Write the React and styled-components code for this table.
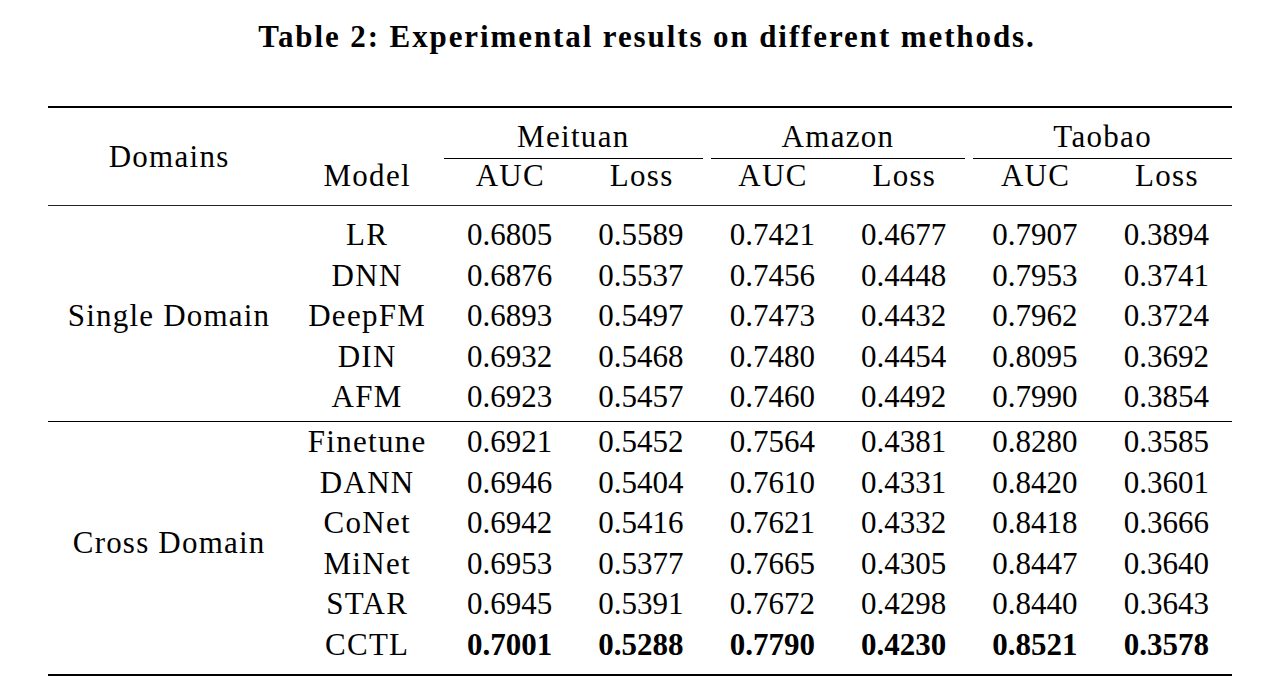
import React from "react";
import styled, { createGlobalStyle } from "styled-components";

const Global = createGlobalStyle`
  html, body { margin: 0; padding: 0; background: #fff; }
  body { font-family: "Liberation Serif", "Times New Roman", serif; color: #000; }
`;

const Page = styled.div`
  width: 1280px;
  height: 698px;
  padding-top: 19px;
  box-sizing: border-box;
  display: flex;
  flex-direction: column;
  align-items: center;
  overflow: hidden;
`;

const Caption = styled.h1`
  margin: 0 0 51px 12px;
  padding-left: 1.9px;
  font-size: 31px;
  line-height: 36px;
  letter-spacing: 1.9px;
  font-weight: 700;
  text-align: center;
`;

const COLS = "241px 155px repeat(6, 131.33px)";

const Head = styled.div`
  width: 1184px;
  display: grid;
  grid-template-columns: ${COLS};
  border-top: 2px solid #000;
  border-bottom: 1px solid #222;
  padding: 12px 0 12px;
  font-size: 31px;
`;

const HeadCell = styled.div`
  text-align: center;
  line-height: 34px;
  letter-spacing: 1.3px;
  padding-left: 1.3px;
  grid-column: ${(p) => p.$col};
  grid-row: ${(p) => p.$row};
  align-self: ${(p) => (p.$center ? "center" : "end")};
`;

const GroupHead = styled.div`
  grid-row: 1;
  grid-column: ${(p) => p.$col} / span 2;
  text-align: center;
  line-height: 34px;
  letter-spacing: 1.3px;
  padding-bottom: 4px;
  margin: 0 ${(p) => p.$mr}px 0 ${(p) => p.$ml}px;
  border-bottom: 1px solid #000;
`;

const Section = styled.div`
  width: 1184px;
  display: grid;
  grid-template-columns: ${COLS};
  grid-auto-rows: 40.5px;
  padding-top: ${(p) => p.$pt}px;
  padding-bottom: ${(p) => p.$pb}px;
  border-bottom: ${(p) => p.$bw}px solid #000;
  font-size: 31px;
`;

const DomainCell = styled.div`
  grid-column: 1;
  grid-row: 1 / span ${(p) => p.$span};
  display: flex;
  align-items: center;
  justify-content: center;
  line-height: 40.5px;
  letter-spacing: 1.2px;
  padding-left: 1.2px;
`;

const ModelCell = styled.div`
  grid-column: 2;
  text-align: center;
  line-height: 40.5px;
  white-space: nowrap;
  letter-spacing: 1.3px;
  padding-left: 1.3px;
`;

const ValueCell = styled.div`
  text-align: center;
  line-height: 40.5px;
  white-space: nowrap;
  font-weight: ${(p) => (p.$bold ? 700 : 400)};
`;

const groups = [
  {
    name: "Single Domain",
    pt: 9.4,
    pb: 3.2,
    bw: 1,
    rows: [
      ["LR", "0.6805", "0.5589", "0.7421", "0.4677", "0.7907", "0.3894"],
      ["DNN", "0.6876", "0.5537", "0.7456", "0.4448", "0.7953", "0.3741"],
      ["DeepFM", "0.6893", "0.5497", "0.7473", "0.4432", "0.7962", "0.3724"],
      ["DIN", "0.6932", "0.5468", "0.7480", "0.4454", "0.8095", "0.3692"],
      ["AFM", "0.6923", "0.5457", "0.7460", "0.4492", "0.7990", "0.3854"],
    ],
  },
  {
    name: "Cross Domain",
    pt: 0,
    pb: 9,
    bw: 2,
    rows: [
      ["Finetune", "0.6921", "0.5452", "0.7564", "0.4381", "0.8280", "0.3585"],
      ["DANN", "0.6946", "0.5404", "0.7610", "0.4331", "0.8420", "0.3601"],
      ["CoNet", "0.6942", "0.5416", "0.7621", "0.4332", "0.8418", "0.3666"],
      ["MiNet", "0.6953", "0.5377", "0.7665", "0.4305", "0.8447", "0.3640"],
      ["STAR", "0.6945", "0.5391", "0.7672", "0.4298", "0.8440", "0.3643"],
      ["CCTL", "0.7001", "0.5288", "0.7790", "0.4230", "0.8521", "0.3578"],
    ],
    boldLast: true,
  },
];

const datasets = [
  { name: "Meituan", col: 3, ml: 0, mr: 4 },
  { name: "Amazon", col: 5, ml: 4, mr: 4 },
  { name: "Taobao", col: 7, ml: 4, mr: 0 },
];

export default function App() {
  return (
    <>
      <Global />
      <Page>
        <Caption>Table 2: Experimental results on different methods.</Caption>
        <Head>
          <HeadCell $col={1} $row="1 / span 2" $center>
            Domains
          </HeadCell>
          {datasets.map((d) => (
            <GroupHead key={d.name} $col={d.col} $ml={d.ml} $mr={d.mr}>
              {d.name}
            </GroupHead>
          ))}
          <HeadCell $col={2} $row={2}>
            Model
          </HeadCell>
          {datasets.map((d) => (
            <React.Fragment key={d.name + "sub"}>
              <HeadCell $col={d.col} $row={2}>
                AUC
              </HeadCell>
              <HeadCell $col={d.col + 1} $row={2}>
                Loss
              </HeadCell>
            </React.Fragment>
          ))}
        </Head>
        {groups.map((g) => (
          <Section key={g.name} $pt={g.pt} $pb={g.pb} $bw={g.bw}>
            <DomainCell $span={g.rows.length}>{g.name}</DomainCell>
            {g.rows.map((r, i) => {
              const bold = g.boldLast && i === g.rows.length - 1;
              return (
                <React.Fragment key={r[0]}>
                  <ModelCell>{r[0]}</ModelCell>
                  {r.slice(1).map((v, j) => (
                    <ValueCell key={j} $bold={bold}>
                      {v}
                    </ValueCell>
                  ))}
                </React.Fragment>
              );
            })}
          </Section>
        ))}
      </Page>
    </>
  );
}
